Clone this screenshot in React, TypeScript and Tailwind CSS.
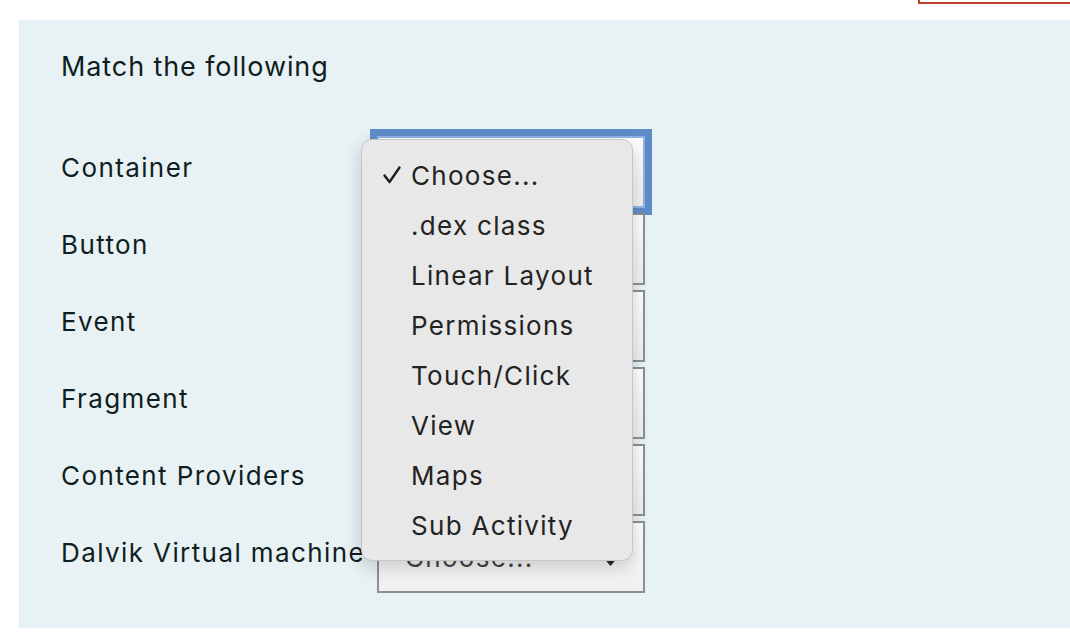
import React from 'react'

const rows = ['Container', 'Button', 'Event', 'Fragment', 'Content Providers', 'Dalvik Virtual machine']

const options = ['Choose...', '.dex class', 'Linear Layout', 'Permissions', 'Touch/Click', 'View', 'Maps', 'Sub Activity']

function Caret() {
  return (
    <svg width="17" height="10" viewBox="0 0 17 10" className="mt-[8px] shrink-0">
      <path d="M0 0 L17 0 L8.5 10 Z" fill="#2a2a2a" />
    </svg>
  )
}

function Check() {
  return (
    <svg width="20" height="20" viewBox="0 0 20 20" className="shrink-0">
      <path d="M2.5 10.5 L7.5 17 L17.5 2.5" fill="none" stroke="#1e1e1e" strokeWidth="2.4" strokeLinecap="round" strokeLinejoin="round" />
    </svg>
  )
}

function Menu() {
  return (
    <div className="absolute left-[-16px] top-[3px] z-10 w-[272px] rounded-[11px] border border-[#c6c6c6] bg-[#e8e8e8] py-[10px] shadow-[0_6px_18px_rgba(0,0,0,0.18)]">
      {options.map((o, i) => (
        <div key={o} className="flex h-[50px] items-center text-[26px] tracking-[1.3px] text-[#232323]">
          <div className="flex w-[49px] justify-end pr-[9px]">{i === 0 && <Check />}</div>
          <span>{o}</span>
        </div>
      ))}
    </div>
  )
}

function Select({ focused, open }: { focused?: boolean; open?: boolean }) {
  return (
    <div className="relative">
      <div
        className={`flex h-[72px] w-[268px] items-center justify-between border-2 bg-gradient-to-b from-white to-[#efefef] pl-[26px] pr-[24px] text-[26px] tracking-[1.3px] text-[#444] ${
          focused ? 'border-[#8db3e6] outline-[7px] outline-solid outline-[#5f8cc8]' : 'border-[#8b9095]'
        }`}
      >
        <span>Choose...</span>
        <Caret />
      </div>
      {open && <Menu />}
    </div>
  )
}

export default function App() {
  return (
    <div className="min-h-screen bg-white font-['Inter','Liberation_Sans',sans-serif]">
      <div className="ml-[918px] h-[4px] w-[152px] border-b-2 border-l-2 border-[#bf3f2b]" />
      <div className="ml-[19px] mt-[16px] bg-[#e8f1f4] pb-[35px] pl-[42px] pt-[29px]">
        <h2 className="text-[27px] leading-[36px] tracking-[0.9px] text-[#0e1e21]">Match the following</h2>
        <div className="mt-[51px] flex flex-col gap-[5px]">
          {rows.map((r, i) => (
            <div key={r} className="flex h-[72px] items-center">
              <div className="mb-[10px] w-[316px] whitespace-nowrap text-[26px] tracking-[1.4px] text-[#0e1e21]">{r}</div>
              <Select focused={i === 0} open={i === 0} />
            </div>
          ))}
        </div>
      </div>
    </div>
  )
}
